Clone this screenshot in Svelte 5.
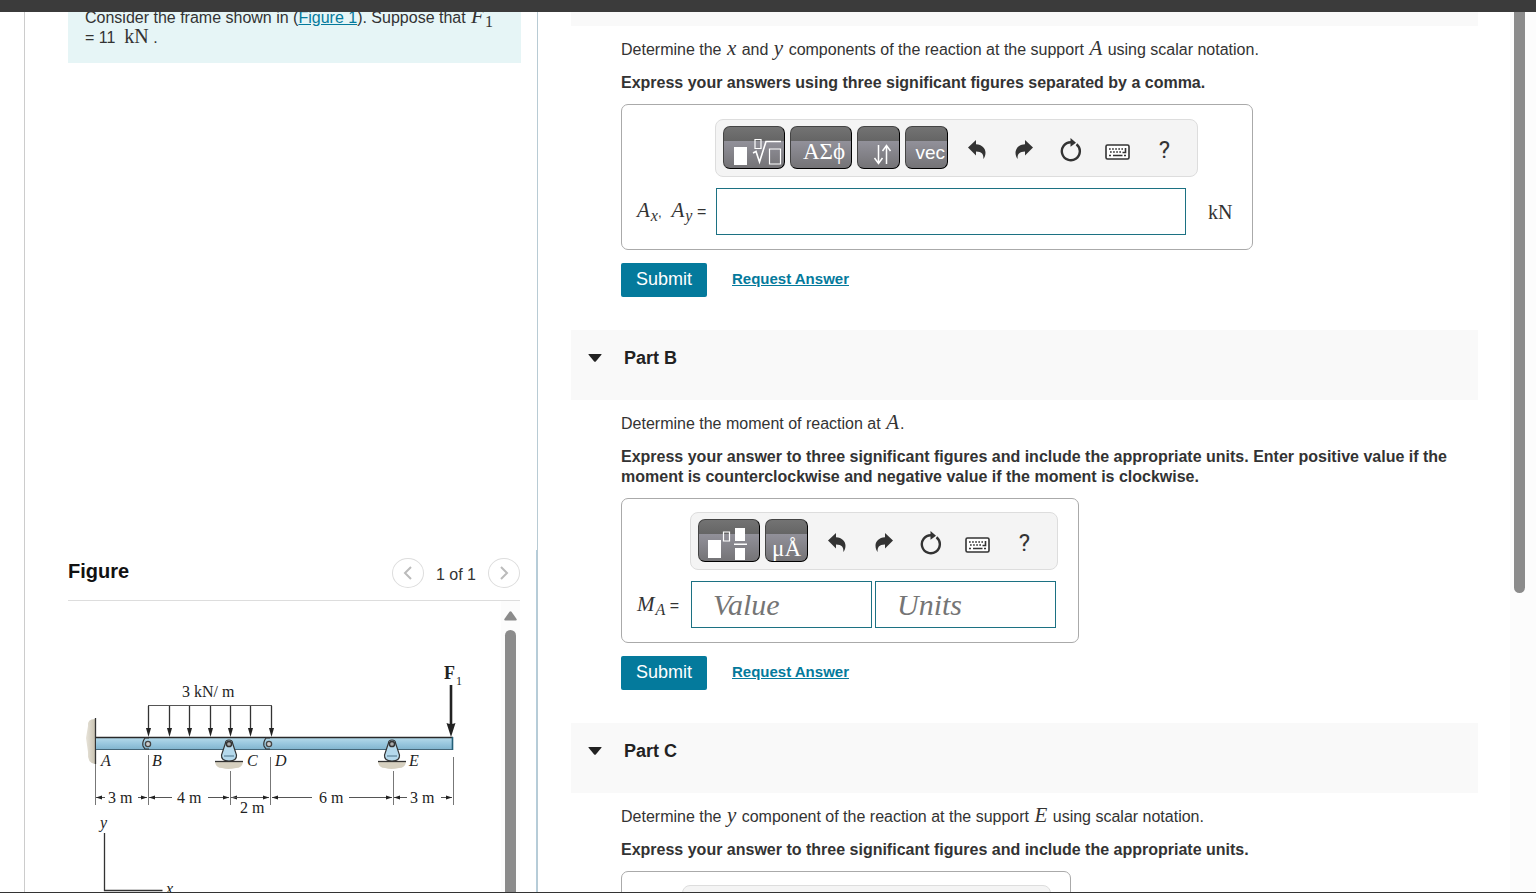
<script lang="ts">
  const loads = [148, 169, 189, 210, 230, 250, 271];
  const marks = [
    { x: 95, top: 764 },
    { x: 148, top: 755 },
    { x: 230, top: 771 },
    { x: 270, top: 757 },
    { x: 393, top: 771 },
    { x: 453, top: 757 },
  ];
  const dims = [
    { from: 96, to: 105, head: 96 },
    { from: 138, to: 147, head: 147 },
    { from: 149, to: 172, head: 149 },
    { from: 208, to: 229, head: 229 },
    { from: 231, to: 269, head: 231 },
    { from: 231, to: 269, head: 269 },
    { from: 272, to: 312, head: 272 },
    { from: 349, to: 392, head: 392 },
    { from: 394, to: 407, head: 394 },
    { from: 441, to: 452, head: 452 },
  ];

  let forceA = $state("");
  let momentValue = $state("");
  let momentUnits = $state("");
</script>

{#snippet tools()}
  <button class="tool" aria-label="Undo">
    <svg width="18" height="20" viewBox="0 0 18 20">
      <path d="M0 7.5 8 0v4.2c6 .3 9.500 4 9.500 8.500 0 2.500-.8 4.800-2.200 6.300.6-4.500-1.300-7.400-7.300-7.500v4z" fill="#333" />
    </svg>
  </button>
  <button class="tool" aria-label="Redo">
    <svg width="18" height="20" viewBox="0 0 18 20">
      <path d="M18 7.500 10 0v4.200C4 4.500.5 8.200.5 12.700c0 2.500.8 4.800 2.200 6.300-.6-4.500 1.300-7.400 7.300-7.500v4z" fill="#333" />
    </svg>
  </button>
  <button class="tool" aria-label="Reset">
    <svg width="22" height="24" viewBox="0 0 22 24">
      <path d="M16.500 6.200a9 9 0 1 1-5.500-2" fill="none" stroke="#333" stroke-width="2.400" />
      <path d="M10.500 0 16 4.700l-5.500 4z" fill="#333" />
    </svg>
  </button>
  <button class="tool" aria-label="Keyboard shortcuts">
    <svg class="keys" width="25" height="16" viewBox="0 0 25 16">
      <rect x="1" y="1" width="23" height="14" rx="1.500" fill="#fff" stroke="#333" stroke-width="1.600" />
      <path d="M4 5h14M5 8h12" stroke="#333" stroke-width="1.700" stroke-dasharray="1.700 1.400" />
      <path d="M20.500 4v4.500h-3M4 11.500h2M8 11.500h9.500M19 11.500h2" fill="none" stroke="#333" stroke-width="1.600" />
    </svg>
  </button>
  <button class="tool help" aria-label="Help">?</button>
{/snippet}

{#snippet partHeader(name: string)}
  <h2 class="part-head">
    <button class="toggle" aria-expanded="true">
      <svg width="14" height="8" viewBox="0 0 14 8"><path d="M1 0h12q1 0 .4.800L7.800 7.400q-.8.800-1.600 0L.6.800Q0 0 1 0z" fill="#222" /></svg>
      {name}
    </button>
  </h2>
{/snippet}

{#snippet submitRow()}
  <div class="actions">
    <button class="submit">Submit</button>
    <a href="#request">Request Answer</a>
  </div>
{/snippet}

{#snippet support(x: number)}
  <g transform="translate({x} 0)">
    <path d="M-14 762h28q-1 6-7 6-8 2-14 0-6 0-7-6z" fill="#d6d0c0" />
    <path d="M-14 761.500h28" stroke="#333" stroke-width="1.300" />
    <path d="M-3.500 743q0-3 3.500-3t3.500 3l4 12q.5 6-7.500 6t-7.500-6z" fill="#b5d9ec" stroke="#333" stroke-width="1.200" />
    <path d="M-5 756h10" stroke="#4c7388" />
    <circle cy="744" r="2.600" fill="#aaa" stroke="#333" stroke-width="1.500" />
  </g>
{/snippet}

<div class="screen">
  <div class="topbar"></div>
  <div class="main">
    <aside class="left">
      <div class="intro">
        <p>
          Consider the frame shown in (<a href="#figure">Figure 1</a>). Suppose that <i class="m">F</i><span class="sub">1</span>
          <br />= 11 &nbsp;<span class="m">kN</span> .
        </p>
      </div>

      <section class="figure" id="figure">
        <header>
          <h2>Figure</h2>
          <div class="pager">
            <button aria-label="Previous figure"><svg width="10" height="14" viewBox="0 0 10 14"><path d="M8 1 2 7l6 6" /></svg></button>
            <span>1 of 1</span>
            <button aria-label="Next figure"><svg width="10" height="14" viewBox="0 0 10 14"><path d="m2 1 6 6-6 6" /></svg></button>
          </div>
        </header>
        <div class="canvas">
          <svg class="frame" width="432" height="310" viewBox="68 601 432 310" role="img" aria-label="Loaded frame">
            <defs>
              <linearGradient id="beam" x1="0" y1="0" x2="0" y2="1">
                <stop offset="0" stop-color="#b4d9ea" />
                <stop offset="0.500" stop-color="#9ac8df" />
                <stop offset="1" stop-color="#83b6d0" />
              </linearGradient>
              <linearGradient id="wall">
                <stop offset="0" stop-color="#e8e4da" />
                <stop offset="1" stop-color="#c9c3b2" />
              </linearGradient>
            </defs>

            <path d="M95 719q-8 0-7 7l-2 12 2 14q-1 11 7 12z" fill="url(#wall)" />
            <path d="M95.500 718v46" stroke="#333" stroke-width="1.300" />
            <rect x="96" y="738" width="357" height="11" fill="url(#beam)" />
            <path d="M96 737.500h357" stroke="#292929" stroke-width="1.400" />
            <path d="M96 749.500h357" stroke="#456779" stroke-width="1.200" />
            <path d="M452.500 737v13" stroke="#246078" stroke-width="1.600" />

            <!-- distributed load -->
            <path d="M148 705.500h124" stroke="#555" />
            {#each loads as x}
              <path d="M{x + 0.5} 706v24" stroke="#333" stroke-width="1.300" />
              <path d="M{x - 2} 728h5l-2.500 9z" fill="#222" />
            {/each}

            {#each [148, 269] as x}
              <path d="M{x + 1} 738h-4q-3 4-2 8l2 3h4" fill="none" stroke="#333" stroke-width="1.200" />
              <circle cx={x} cy="744" r="2.600" fill="#ccc" stroke="#444" stroke-width="1.300" />
            {/each}
            {@render support(229)}
            {@render support(392)}

            <path d="M451 685v40" stroke="#222" stroke-width="2.600" />
            <path d="M446.500 723q4.500 2 9 0l-4.500 14z" fill="#222" />

            <!-- dimensions -->
            {#each marks as m}
              <path d="M{m.x + 0.5} {m.top}V805" stroke="#777" />
            {/each}
            {#each dims as d}
              <path d="M{d.from} 797.500H{d.to}" stroke="#555" />
              <path d="M{d.head} 797.500l{d.head === d.from ? 6 : -6} -2v4z" fill="#222" />
            {/each}

            <path d="M104.500 833v57.500h58" fill="none" stroke="#333" stroke-width="1.300" />

            <g class="text">
              <text x="182" y="697">3 kN/ m</text>
              <text x="108" y="803">3 m</text>
              <text x="177" y="803">4 m</text>
              <text x="240" y="813">2 m</text>
              <text x="319" y="803">6 m</text>
              <text x="410" y="803">3 m</text>
            </g>
            <g class="text it">
              <text x="101" y="766">A</text>
              <text x="152" y="766">B</text>
              <text x="247" y="766">C</text>
              <text x="275" y="766">D</text>
              <text x="409" y="766">E</text>
              <text x="100" y="828">y</text>
              <text x="166" y="894">x</text>
            </g>
            <text class="force" x="444" y="679">F</text>
            <text class="force-sub" x="456" y="685">1</text>
          </svg>
          <div class="scroll">
            <svg width="13" height="10" viewBox="0 0 13 10"><path d="M5.500.8q1-1.200 2 0L12.600 8q.6 1.500-1 1.500H1.400q-1.600 0-1-1.500z" fill="#8a8a8a" /></svg>
            <div class="thumb"></div>
          </div>
        </div>
      </section>
    </aside>

    <main class="right">
      <div class="part-head cut"></div>
      <section class="part">
        <p>
          Determine the <i class="m">x</i> and <i class="m">y</i> components of the reaction at the support <i class="m">A</i> using scalar notation.
        </p>
        <p><b>Express your answers using three significant figures separated by a comma.</b></p>
        <div class="answer">
          <div class="toolbar">
            <button class="pal wide" aria-label="Templates">
              <svg width="60" height="41" viewBox="0 0 60 41">
                <path d="M10 20h13v18H10z" fill="#fff" />
                <path d="M31 12.500h6v9h-6zM45.500 22h11v15h-11z" fill="none" stroke="#fff" stroke-width="1.200" />
                <path d="m29 26 3-1.500L35.500 35 42 14.500h15" fill="none" stroke="#fff" stroke-width="1.600" />
              </svg>
            </button>
            <button class="pal wide greek" aria-label="Symbols">ΑΣϕ</button>
            <button class="pal" aria-label="Arrows">
              <svg width="40" height="41" viewBox="0 0 40 41">
                <path d="M20.500 18v18m-4-5 4 5.500 4-5.500M28.500 37V19m-4 5 4-5.500 4 5.500" fill="none" stroke="#fff" stroke-width="1.500" />
              </svg>
            </button>
            <button class="pal vec">vec</button>
            {@render tools()}
          </div>
          <label for="force"><i class="m">A</i><i class="sub">x</i><small>,</small>&nbsp; <i class="m">A</i><i class="sub">y</i> =</label>
          <div class="fields">
            <input id="force" class="long" bind:value={forceA} />
            <span class="unit m">kN</span>
          </div>
        </div>
        {@render submitRow()}
      </section>

      {@render partHeader("Part B")}
      <section class="part">
        <p>Determine the moment of reaction at <i class="m">A</i>.</p>
        <p>
          <b>Express your answer to three significant figures and include the appropriate units. Enter positive value if the moment is counterclockwise and negative value if the moment is clockwise.</b>
        </p>
        <div class="answer with-units">
          <div class="toolbar">
            <button class="pal wide" aria-label="Templates">
              <svg width="60" height="41" viewBox="0 0 60 41">
                <path d="M9 20h13v18H9zM36 8h10v13H36zM36 28h10v12H36zM35 23.500h13v1.600H35z" fill="#fff" />
                <path d="M24.500 12h6v9h-6z" fill="none" stroke="#fff" stroke-width="1.200" />
              </svg>
            </button>
            <button class="pal greek mu" aria-label="Units">μÅ</button>
            {@render tools()}
          </div>
          <label for="moment"><i class="m">M</i><i class="sub">A</i> =</label>
          <div class="fields">
            <input id="moment" placeholder="Value" bind:value={momentValue} />
            <input aria-label="Units" placeholder="Units" bind:value={momentUnits} />
          </div>
        </div>
        {@render submitRow()}
      </section>

      {@render partHeader("Part C")}
      <section class="part">
        <p>
          Determine the <i class="m">y</i> component of the reaction at the support <i class="m">E</i> using scalar notation.
        </p>
        <p><b>Express your answer to three significant figures and include the appropriate units.</b></p>
        <div class="answer short">
          <div class="toolbar">
            {@render tools()}
          </div>
        </div>
      </section>
    </main>

    <div class="page-scroll"><div class="thumb"></div></div>
  </div>
</div>

<style>
  :global(body) {
    margin: 0;
    background: #fff;
  }
  .screen {
    display: flex;
    flex-direction: column;
    height: 100vh;
    box-sizing: border-box;
    overflow: hidden;
    border-bottom: 1px solid #333;
    font: 16px/20px "Liberation Sans", Arial, sans-serif;
    color: #333;
  }
  .topbar {
    flex: 0 0 12px;
    background: #3b3b3b;
  }
  .main {
    flex: 1;
    min-height: 0;
    display: flex;
  }
  a {
    color: #047a9c;
  }
  button {
    font-family: inherit;
    padding: 0;
    cursor: pointer;
  }
  h2,
  p {
    margin: 0;
  }
  .m,
  .sub {
    font-family: "Liberation Serif", "Times New Roman", serif;
    font-size: 20px;
    line-height: 0;
  }
  i.m {
    margin: 0 1px;
    font-size: 21px;
  }
  .sub {
    font-size: 16px;
    position: relative;
    top: 4px;
  }

  .left {
    flex: 0 0 35%;
    box-sizing: border-box;
    margin-left: 24px;
    max-width: 514px;
    display: flex;
    flex-direction: column;
    justify-content: space-between;
    border-left: 1px solid #ccc;
    border-right: 1px solid #b8cbd4;
  }
  .intro {
    margin: 0 16px 0 43px;
    padding: 0 17px 15px;
    overflow: hidden;
    background: #e6f5f6;
  }
  .intro p {
    margin-top: -4px;
  }
  .figure {
    flex: 0 0 342px;
    box-sizing: border-box;
    display: flex;
    flex-direction: column;
    min-height: 0;
    padding: 0 16px 0 43px;
    border-right: 1px solid #b5cddb;
  }
  .figure header {
    display: flex;
    flex: none;
    justify-content: space-between;
    box-sizing: border-box;
    height: 51px;
    padding-top: 8px;
    border-bottom: 1px solid #ddd;
  }
  .figure h2 {
    padding-top: 1px;
    font-size: 20px;
    line-height: 24px;
    color: #111;
  }
  .pager {
    display: flex;
    gap: 12px;
  }
  .pager span {
    padding-top: 7px;
  }
  .pager button {
    display: grid;
    place-items: center;
    box-sizing: border-box;
    width: 32px;
    height: 30px;
    border: 1px solid #ddd;
    border-radius: 50%;
    background: #fff;
  }
  .pager path {
    fill: none;
    stroke: #bbb;
    stroke-width: 2;
  }
  .canvas {
    flex: 1 1 0;
    min-height: 0;
    display: flex;
    justify-content: space-between;
    overflow: hidden;
  }
  .frame {
    flex: none;
  }
  .text,
  .force,
  .force-sub {
    font-family: "Liberation Serif", "Times New Roman", serif;
    font-size: 16px;
    fill: #222;
  }
  .force {
    font-size: 18px;
    font-weight: bold;
  }
  .it {
    font-style: italic;
  }
  .force-sub {
    font-size: 12px;
  }
  .scroll {
    width: 19px;
    display: flex;
    flex-direction: column;
    align-items: center;
    gap: 9px;
    padding-top: 10px;
    box-sizing: border-box;
    background: #fcfcfc;
  }
  .scroll svg {
    flex: none;
  }
  .thumb {
    width: 11px;
    background: #8b8b8b;
  }
  .scroll .thumb {
    flex: 1;
    border-radius: 6px 6px 0 0;
  }

  .right {
    flex: 1;
    min-width: 0;
    margin: 0 32px 0 33px;
  }
  .part-head {
    height: 70px;
    background: #f9f9f9;
  }
  .part-head.cut {
    height: 14px;
  }
  .toggle {
    display: flex;
    align-items: center;
    gap: 22px;
    padding: 17px 17px 0;
    border: 0;
    background: none;
    font-size: 18px;
    line-height: 22px;
    font-weight: bold;
    color: #222;
  }
  .part {
    padding: 14px 0 33px 50px;
  }
  .part p + p {
    margin-top: 13px;
  }
  .answer {
    display: grid;
    grid-template-columns: 79px auto;
    row-gap: 11px;
    width: fit-content;
    margin-top: 11px;
    padding: 14px 19px 14px 14px;
    border: 1px solid #aaa;
    border-radius: 7px;
  }
  .with-units,
  .short {
    grid-template-columns: 54px auto;
    padding-right: 20px;
    padding-top: 13px;
  }
  .short {
    grid-template-columns: 46px auto;
    padding-right: 19px;
  }
  .short .toolbar {
    width: 351px;
    justify-content: flex-end;
  }
  .toolbar {
    grid-column: 2;
    justify-self: start;
    display: flex;
    padding: 6px 9px 7px 7px;
    border: 1px solid #ddd;
    border-radius: 8px;
    background: #f4f4f4;
  }
  .pal {
    display: flex;
    box-sizing: border-box;
    width: 43px;
    height: 43px;
    margin-right: 5px;
    overflow: hidden;
    border: 1px solid #444;
    border-right-color: #000;
    border-bottom-color: #000;
    border-radius: 7px;
    background: linear-gradient(#737373, #656565 14px, #92919a 14px, #747376);
    color: #fff;
  }
  .pal svg {
    flex: none;
  }
  .wide {
    width: 62px;
  }
  .greek {
    justify-content: flex-end;
    padding: 13px 6px 0 0;
    font-family: "Liberation Serif", "Times New Roman", serif;
    font-size: 23px;
    line-height: 24px;
  }
  .mu {
    padding-top: 17px;
  }
  .vec {
    justify-content: flex-end;
    padding: 14px 2px 0 0;
    font-size: 19px;
    line-height: 24px;
  }
  .tool {
    display: grid;
    place-items: center;
    width: 47px;
    height: 47px;
    margin-bottom: -4px;
    border: 0;
    background: none;
  }
  .keys {
    margin-top: 5px;
  }
  .help {
    font-family: Roboto, sans-serif;
    font-size: 24px;
    color: #333;
  }
  label {
    align-self: center;
    padding-top: 2px;
    white-space: nowrap;
  }
  .fields {
    display: flex;
    align-items: center;
    gap: 3px;
    padding-left: 1px;
  }
  input {
    box-sizing: border-box;
    width: 181px;
    height: 47px;
    padding: 0 21px;
    border: 1px solid #1c7183;
    background: #fff;
    font: 30px "Liberation Serif", "Times New Roman", serif;
  }
  input::placeholder {
    font-style: italic;
    color: #757575;
    opacity: 1;
  }
  .long {
    width: 470px;
  }
  .unit {
    padding: 0 1px 0 19px;
  }
  .actions {
    display: flex;
    align-items: center;
    gap: 25px;
    margin-top: 13px;
  }
  .actions a {
    padding-bottom: 2px;
    font-size: 15px;
    font-weight: bold;
  }
  .submit {
    width: 86px;
    height: 34px;
    padding-bottom: 2px;
    border: 0;
    border-radius: 2px;
    background: #047a9c;
    color: #fff;
    font-size: 18px;
  }

  .page-scroll {
    width: 26px;
    padding-left: 4px;
    box-sizing: border-box;
    background: #fcfcfc;
  }
  .page-scroll .thumb {
    height: 66%;
    border-radius: 0 0 6px 6px;
  }
</style>
